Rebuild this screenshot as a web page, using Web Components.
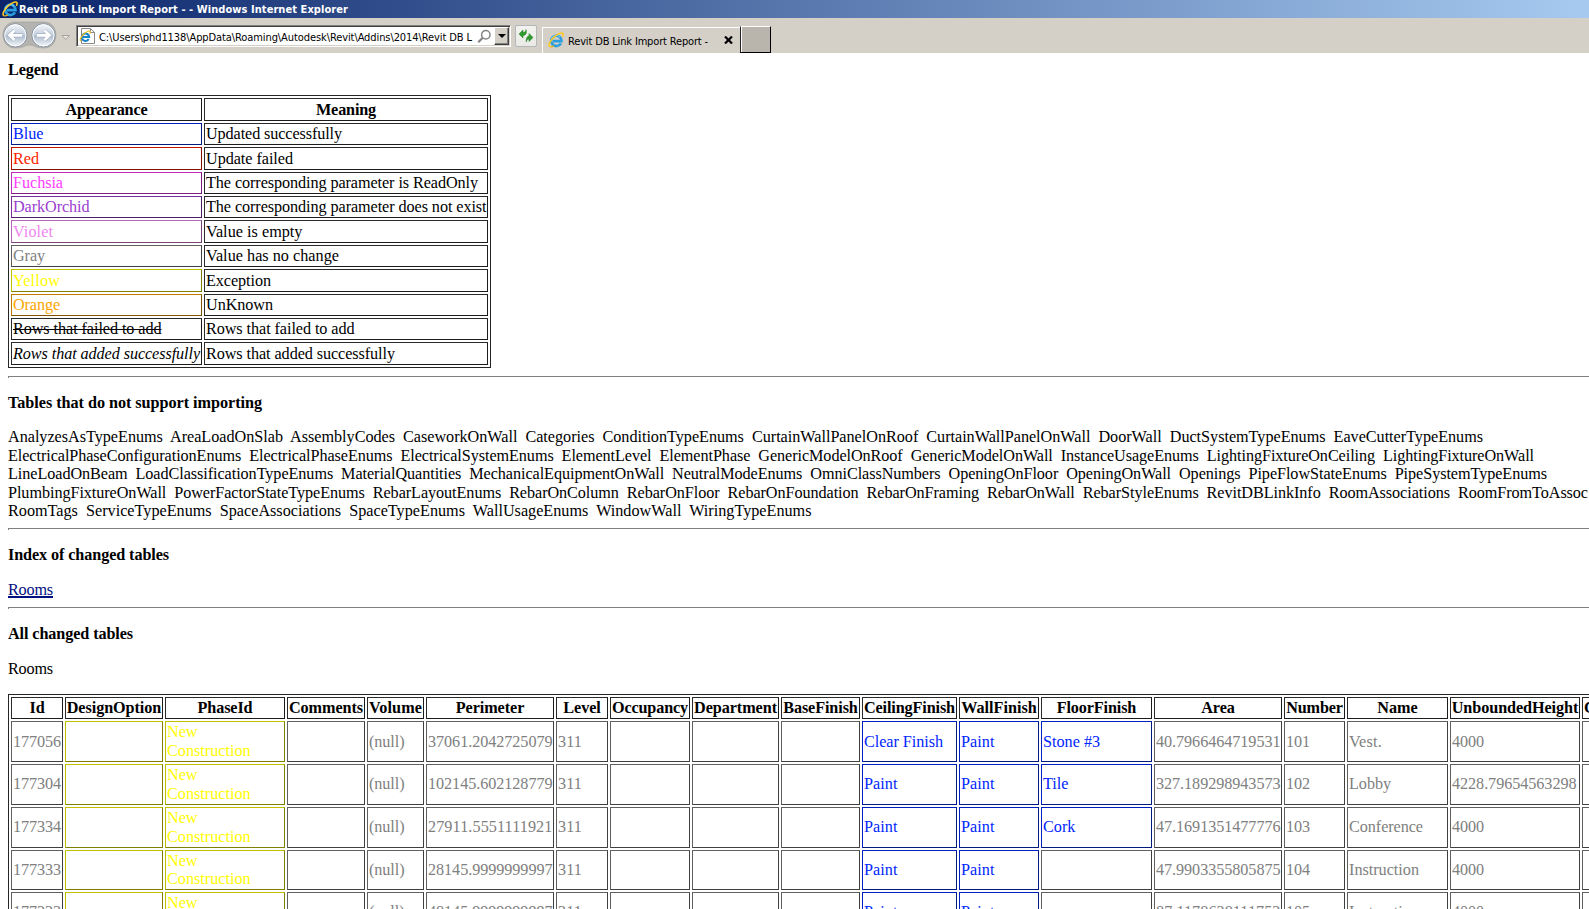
<!DOCTYPE html>
<html lang="en">
<head>
<meta charset="utf-8">
<title>Revit DB Link Import Report</title>
<style>
  html, body {
    margin: 0;
    height: 909px;
    overflow: hidden;
    background: #fff;
  }
</style>
</head>
<body>
<import-report-window></import-report-window>

<script>
// Text on one line, spaced to fill an exact width
class FitText extends HTMLElement
{
  connectedCallback ()
  {
    const width = Number(this.getAttribute('width'))
    const text = this.getAttribute('text')

    this.attachShadow({ mode: 'open' }).innerHTML = `
      <style>
        :host { display: block; flex: none; }
        span {
          display: block;
          width: max-content;
          white-space: pre;
          text-decoration: var(--line, none);
          text-underline-offset: 2px;
        }
      </style>
      <span>${text}</span>
    `

    const span = this.shadowRoot.querySelector('span')
    const natural = span.getBoundingClientRect().width
    if (width && natural) {
      span.style.letterSpacing = `${(width - natural) / span.textContent.length}px`
      this.style.width = `${width}px`
    }
  }
}

customElements.define('fit-text', FitText)

class IeLogo extends HTMLElement
{
  connectedCallback ()
  {
    this.attachShadow({ mode: 'open' }).innerHTML = `
      <style>
        :host { display: block; width: 16px; height: 16px; flex: none; }
        svg { display: block; width: 100%; height: 100%; }
      </style>
      <svg viewBox="0 0 16 16" fill="none">
        <path d="M12.9 11.3A5.2 5.2 0 1 1 13.5 9.2H5" stroke="#2a9fe0" stroke-width="2.7"/>
        <path d="M3.2 7.5A5.2 5.2 0 0 1 12 5" stroke="#7fd2f7" stroke-width=".9"/>
        <path d="M2.4 14.8C-.6 14.2 1.8 8.6 6.2 4.8C10.2 1.3 14.8 -.4 15.1 2.2C15.2 3 14.9 3.9 14.4 4.8" stroke="#fbc926" stroke-width="1.6"/>
        <path d="M2.4 14.8C3.5 15.1 4.8 14.4 6 13.7" stroke="#f0b013" stroke-width="1.2"/>
      </svg>
    `
  }
}

customElements.define('ie-logo', IeLogo)

class TitleBar extends HTMLElement
{
  connectedCallback ()
  {
    this.attachShadow({ mode: 'open' }).innerHTML = `
      <style>
        :host {
          display: flex;
          align-items: center;
          gap: 1px;
          height: 18px;
          padding-left: 2px;
          box-sizing: border-box;
          background: linear-gradient(to right, #0a246a, #a6caf0);
          color: #fff;
          font: bold 11px/18px "DejaVu Sans Condensed", "DejaVu Sans", sans-serif;
        }
        fit-text { margin-top: 2px; }
      </style>
      <ie-logo></ie-logo>
      <fit-text width="329" text="Revit DB Link Import Report - - Windows Internet Explorer"></fit-text>
    `
  }
}

customElements.define('title-bar', TitleBar)

class BrowserToolbar extends HTMLElement
{
  connectedCallback ()
  {
    this.attachShadow({ mode: 'open' }).innerHTML = `
      <style>
        :host {
          display: flex;
          align-items: flex-start;
          height: 35px;
          background: #d4d0c8;
          color: #000;
          font: 11px/16px "DejaVu Sans Condensed", "DejaVu Sans", sans-serif;
        }
        svg { display: block; flex: none; }
        .nav { margin-top: 2px; }
        .address {
          display: flex;
          align-items: center;
          box-sizing: border-box;
          width: 435px;
          height: 22px;
          margin: 7px 0 0 0;
          padding: 0 1px 0 2px;
          background: #fff;
          border: 1px solid;
          border-color: #808080 #fff #fff #808080;
          box-shadow: inset 1px 1px #404040, inset -1px -1px #d4d0c8;
        }
        .doc { margin-right: 3px; }
        .address fit-text { margin-top: 4px; }
        .glass { margin-left: 5px; }
        .drop {
          display: flex;
          align-items: center;
          justify-content: center;
          box-sizing: border-box;
          width: 16px;
          height: 18px;
          margin-left: 2px;
          background: #d4d0c8;
          border: 1px solid;
          border-color: #fff #404040 #404040 #fff;
          box-shadow: inset -1px -1px #808080;
        }
        .refresh {
          display: flex;
          align-items: center;
          justify-content: center;
          box-sizing: border-box;
          width: 22px;
          height: 22px;
          margin: 7px 0 0 4px;
          background: linear-gradient(#f2f2f0, #e9e9e6);
          border: 1px solid #b4b6ba;
          border-radius: 2px;
        }
        .tab {
          display: flex;
          align-items: center;
          box-sizing: border-box;
          width: 198px;
          height: 26px;
          margin: 9px 0 0 5px;
          padding: 0 7px 0 5px;
          border: solid #fff;
          border-width: 1px 0 0 1px;
        }
        .tab ie-logo { margin-top: -1px; }
        .tab fit-text { margin: 2px 0 0 4px; }
        .tab .close { margin: -2px 0 0 auto; }
        .new-tab {
          box-sizing: border-box;
          width: 31px;
          height: 27px;
          margin-top: 8px;
          background: #b9b5ad;
          border: 1px solid;
          border-color: #fff #000 #000 #202020;
          box-shadow: inset 1px 0 #fff;
        }
      </style>

      <svg class="nav" width="76" height="30" viewBox="0 0 76 30">
        <defs>
          <linearGradient id="disc" x1="0" y1="0" x2="0" y2="1">
            <stop offset="0" stop-color="#f4f8fc"/>
            <stop offset=".48" stop-color="#c4cfdd"/>
            <stop offset=".52" stop-color="#aebccd"/>
            <stop offset="1" stop-color="#f4f8fb"/>
          </linearGradient>
        </defs>
        <path d="M15 2H44C60 2 60 28 44 28C35 28 34 25 29.5 25S24 28 15 28C-1 28-1 2 15 2Z" fill="#b4b3b0" stroke="#a09f9c" stroke-width=".6"/>
        <g fill="url(#disc)" stroke="#8592a3" stroke-width="1">
          <circle cx="15.3" cy="15.3" r="11.6"/>
          <circle cx="43.5" cy="15.3" r="11.6"/>
        </g>
        <g fill="none" stroke="#fff" stroke-width="1">
          <circle cx="15.3" cy="15.3" r="10.6"/>
          <circle cx="43.5" cy="15.3" r="10.6"/>
        </g>
        <g fill="none" stroke="#a3b0c1" stroke-width="4" stroke-linejoin="round">
          <path d="M22.5 15.3H10M14.5 10.5L9.5 15.3L14.5 20"/>
          <path d="M36.5 15.3H49M44.5 10.5L49.5 15.3L44.5 20"/>
        </g>
        <g fill="none" stroke="#fff" stroke-width="2.7">
          <path d="M22.2 15.3H10M14.5 10.5L9.5 15.3L14.5 20"/>
          <path d="M36.8 15.3H49M44.5 10.5L49.5 15.3L44.5 20"/>
        </g>
        <path d="M62 15.5H69.500L65.700 19.500Z" fill="#e8e6e2" stroke="#a09d96" stroke-width=".9"/>
      </svg>

      <div class="address">
        <svg class="doc" width="17" height="17" viewBox="0 0 17 17" fill="none">
          <path d="M2.5 .5H11.5L15.5 4.5V15.5H2.5Z" fill="#fff" stroke="#8a8a8a"/>
          <path d="M11.5 .5V4.5H15.5" stroke="#8a8a8a"/>
          <path d="M9.7 11.1A3.7 3.7 0 1 1 10.2 9.1H4" stroke="#1583c8" stroke-width="2"/>
          <path d="M2 13C0 12.4 2 8.5 5 5.8C8 3.2 11 2.2 11.3 4C11.4 4.6 11.1 5.2 10.8 5.7" stroke="#f4bd1e" stroke-width="1.2"/>
        </svg>
        <fit-text width="373" text="C:\\Users\\phd1138\\AppData\\Roaming\\Autodesk\\Revit\\Addins\\2014\\Revit DB L"></fit-text>
        <svg class="glass" width="15" height="15" viewBox="0 0 15 15" fill="none" stroke="#858585">
          <circle cx="8.8" cy="5.7" r="4.2" stroke-width="1.5"/>
          <path d="M5.7 8.8L1.3 13.2" stroke-width="2.2"/>
        </svg>
        <div class="drop">
          <svg width="8" height="4" viewBox="0 0 8 4"><path d="M0 0H8L4 4Z" fill="#000"/></svg>
        </div>
      </div>

      <div class="refresh">
        <svg width="16" height="16" viewBox="0 0 16 16" fill="#2c9a2c" stroke="#1d7a1d" stroke-width=".5">
          <path d="M1 6L5 2V4.5C7 4.3 7.8 3.5 8 1.5C9 5 8 7.3 5 7.5V10Z"/>
          <path d="M15 9.5L11 5.5V8C9 8.2 8 10.5 8.2 14C8.8 12 9.5 11.2 11 11V13.5Z"/>
        </svg>
      </div>

      <div class="tab">
        <ie-logo></ie-logo>
        <fit-text width="140" text="Revit DB Link Import Report -"></fit-text>
        <svg class="close" width="9" height="8" viewBox="0 0 9 8"><path d="M1 .5L8 7.5M8 .5L1 7.5" stroke="#000" stroke-width="2.2"/></svg>
      </div>
      <div class="new-tab"></div>
    `
  }
}

customElements.define('browser-toolbar', BrowserToolbar)

// Bordered table with separated cells. Rows hold [text, tone, width] cells.
class ReportTable extends HTMLElement
{
  set data ({ columns, heights, head, rows })
  {
    const cell = ([text, tone = '', width = 0]) => `
      <div class="cell ${tone}">${text
        ? text.split('\n').map(t => `<fit-text text="${t}" width="${width}"></fit-text>`).join('')
        : ''}</div>`

    this.attachShadow({ mode: 'open' }).innerHTML = `
      <style>
        :host {
          display: grid;
          box-sizing: border-box;
          width: max-content;
          gap: 2px;
          padding: 2px;
          border: 1px solid #262626;
          grid-template-columns: ${columns.map(c => c + 'px').join(' ')};
          grid-template-rows: ${heights.map(h => h + 'px').join(' ')};
        }
        .cell {
          --light: #2b2b2b;
          --dark: #1c1c1c;
          display: flex;
          flex-direction: column;
          align-items: flex-start;
          justify-content: center;
          box-sizing: border-box;
          padding: var(--cell-top, 0px) 0 0 1px;
          line-height: 18.5px;
          border: 1px solid;
          border-color: var(--light) var(--dark) var(--dark) var(--light);
        }
        .head { font-weight: bold; align-items: center; padding-left: 0; }
        .edge { align-items: flex-start; padding-left: 1px; }
        .blue { --light: #0020c0; --dark: #001a80; }
        .blue fit-text { color: #0026ff; }
        .red { --light: #c01600; --dark: #801000; }
        .red fit-text { color: #ff1e00; }
        .fuchsia { --light: #c02cc0; --dark: #801c80; }
        .fuchsia fit-text { color: #ff3cff; }
        .darkorchid { --light: #73309a; --dark: #4c2066; }
        .darkorchid fit-text { color: #9b40cf; }
        .violet { --light: #b364b3; --dark: #774377; }
        .violet fit-text { color: #f087f0; }
        .gray { --light: #606060; --dark: #404040; }
        .gray fit-text { color: #808080; }
        .yellow { --light: #bfbf00; --dark: #808000; }
        .yellow fit-text { color: #ffff00; }
        .orange { --light: #c07c00; --dark: #805300; }
        .orange fit-text { color: #ffa500; }
        .strike { --line: line-through; }
        .italic { font-style: italic; }
        .low { padding-top: 2px; }
      </style>
      ${head.map(([text, width, edge = '']) => cell([text, `head ${edge}`, width])).join('')}
      ${rows.flat().map(cell).join('')}
    `
  }
}

customElements.define('report-table', ReportTable)

class ReportRule extends HTMLElement
{
  connectedCallback ()
  {
    this.attachShadow({ mode: 'open' }).innerHTML = `
      <style>
        :host {
          display: block;
          box-sizing: border-box;
          height: 2px;
          border-top: 1px solid #808080;
          border-left: 1px solid #808080;
        }
      </style>
    `
  }
}

customElements.define('report-rule', ReportRule)

const legend = {
  columns: [191, 284],
  heights: [23, 22, 23, 22, 22, 23, 22, 23, 22, 22, 23],
  head: [['Appearance', 82], ['Meaning', 60]],
  rows: [
    [['Blue', 'blue', 30.5], ['Updated successfully', '', 136]],
    [['Red', 'red', 26], ['Update failed', '', 87]],
    [['Fuchsia', 'fuchsia', 50], ['The corresponding parameter is ReadOnly', '', 272]],
    [['DarkOrchid', 'darkorchid', 76.5], ['The corresponding parameter does not exist', '', 280.5]],
    [['Violet', 'violet', 40], ['Value is empty', '', 96.5]],
    [['Gray', 'gray', 32], ['Value has no change', '', 133]],
    [['Yellow', 'yellow', 47], ['Exception', '', 65]],
    [['Orange', 'orange', 47], ['UnKnown', '', 67]],
    [['Rows that failed to add', 'strike', 148.5], ['Rows that failed to add', '', 148.5]],
    [['Rows that added successfully', 'italic', 187], ['Rows that added successfully', '', 189]]
  ]
}

const roomRow = (id, perimeter, ceiling, wall, floor, area, number, name, nameWidth, height) => [
  [id, 'gray', 48],
  ['', 'yellow'],
  ['New\nConstruction', 'yellow'],
  ['', 'gray'],
  ['(null)', 'gray', 35.5],
  [perimeter, 'gray', 124.5],
  ['311', 'gray', 24],
  ['', 'gray'],
  ['', 'gray'],
  ['', 'gray'],
  [ceiling, 'blue', ceiling === 'Paint' ? 33.5 : 79],
  [wall, 'blue', 33.5],
  [floor, floor ? 'blue' : 'gray'],
  [area, 'gray', 124.5],
  [number, 'gray', 24],
  [name, 'gray', nameWidth],
  [height, 'gray', height === '4000' ? 32 : 124.5],
  ['', 'gray']
]

// One-line cells sit a pixel lower
const lowered = row => row.map(([text, tone, width]) =>
  [text, text.includes('\n') ? tone : `${tone} low`, width])

const rooms = {
  columns: [52, 98, 120, 78, 57, 128, 52, 80, 87, 79, 95, 80, 111, 128, 61, 101, 130, 90],
  heights: [22, 41, 41, 41, 40, 41],
  head: [
    ['Id', 15], ['DesignOption', 94.5], ['PhaseId', 55], ['Comments', 74], ['Volume', 53],
    ['Perimeter', 68.5], ['Level', 37.5], ['Occupancy', 76], ['Department', 83],
    ['BaseFinish', 74.5], ['CeilingFinish', 91], ['WallFinish', 75.5], ['FloorFinish', 79.5],
    ['Area', 33.5], ['Number', 56.5], ['Name', 40.5], ['UnboundedHeight', 126.5],
    ['C', 12, 'edge']
  ],
  rows: [
    lowered(roomRow('177056', '37061.2042725079', 'Clear Finish', 'Paint', 'Stone #3', '40.7966464719531', '101', 'Vest.', 33, '4000')),
    roomRow('177304', '102145.602128779', 'Paint', 'Paint', 'Tile', '327.189298943573', '102', 'Lobby', 42, '4228.79654563298'),
    roomRow('177334', '27911.5551111921', 'Paint', 'Paint', 'Cork', '47.1691351477776', '103', 'Conference', 74, '4000'),
    roomRow('177333', '28145.9999999997', 'Paint', 'Paint', '', '47.9903355805875', '104', 'Instruction', 70, '4000'),
    roomRow('177332', '48145.9999999997', 'Paint', 'Paint', '', '87.1178638111753', '105', 'Instruction', 70, '4000')
  ]
}

// [width, names] for every line of the list
const unsupported = [
  [1475, 'AnalyzesAsTypeEnums AreaLoadOnSlab AssemblyCodes CaseworkOnWall Categories ConditionTypeEnums CurtainWallPanelOnRoof CurtainWallPanelOnWall DoorWall DuctSystemTypeEnums EaveCutterTypeEnums'],
  [1526, 'ElectricalPhaseConfigurationEnums ElectricalPhaseEnums ElectricalSystemEnums ElementLevel ElementPhase GenericModelOnRoof GenericModelOnWall InstanceUsageEnums LightingFixtureOnCeiling LightingFixtureOnWall'],
  [1539, 'LineLoadOnBeam LoadClassificationTypeEnums MaterialQuantities MechanicalEquipmentOnWall NeutralModeEnums OmniClassNumbers OpeningOnFloor OpeningOnWall Openings PipeFlowStateEnums PipeSystemTypeEnums'],
  [1580, 'PlumbingFixtureOnWall PowerFactorStateTypeEnums RebarLayoutEnums RebarOnColumn RebarOnFloor RebarOnFoundation RebarOnFraming RebarOnWall RebarStyleEnums RevitDBLinkInfo RoomAssociations RoomFromToAssoc'],
  [803.5, 'RoomTags ServiceTypeEnums SpaceAssociations SpaceTypeEnums WallUsageEnums WindowWall WiringTypeEnums']
]

class ReportPage extends HTMLElement
{
  connectedCallback ()
  {
    this.attachShadow({ mode: 'open' }).innerHTML = `
      <style>
        :host {
          display: block;
          padding: 8px 0 0 8px;
          color: #000;
          font: 16.2px/18px "Liberation Serif", "Times New Roman", serif;
        }
        h4, p { margin: 0; height: 18px; font-size: inherit; }
        h4 { font-weight: bold; }
        .legend { margin: 16px 0 8px; --cell-top: .6px; }
        h4.section { margin: 16px 0; }
        .names { height: 93px; margin-bottom: 7px; line-height: 18.5px; }
        p { padding-top: 1px; }
        .index { margin-bottom: 8px; }
        a { color: #000f80; --line: underline; }
        .rooms { margin-top: 16px; }
      </style>
      <h4><fit-text width="50.5" text="Legend"></fit-text></h4>
      <report-table class="legend"></report-table>
      <report-rule></report-rule>
      <h4 class="section"><fit-text width="254" text="Tables that do not support importing"></fit-text></h4>
      <div class="names">
        ${unsupported.map(([width, names]) =>
          `<fit-text width="${width}" text="${names.replaceAll(' ', '&nbsp; ')}"></fit-text>`).join('')}
      </div>
      <report-rule></report-rule>
      <h4 class="section"><fit-text width="161" text="Index of changed tables"></fit-text></h4>
      <p class="index"><a href="#rooms"><fit-text width="45" text="Rooms"></fit-text></a></p>
      <report-rule></report-rule>
      <h4 class="section"><fit-text width="125" text="All changed tables"></fit-text></h4>
      <p><fit-text width="45" text="Rooms"></fit-text></p>
      <report-table class="rooms" id="rooms"></report-table>
    `

    this.shadowRoot.querySelector('.legend').data = legend
    this.shadowRoot.querySelector('.rooms').data = rooms
  }
}

customElements.define('report-page', ReportPage)

class ImportReportWindow extends HTMLElement
{
  connectedCallback ()
  {
    this.attachShadow({ mode: 'open' }).innerHTML = `
      <style>
        :host { display: block; width: 1589px; height: 909px; overflow: hidden; }
      </style>
      <title-bar></title-bar>
      <browser-toolbar></browser-toolbar>
      <report-page></report-page>
    `
  }
}

customElements.define('import-report-window', ImportReportWindow)
</script>
</body>
</html>
